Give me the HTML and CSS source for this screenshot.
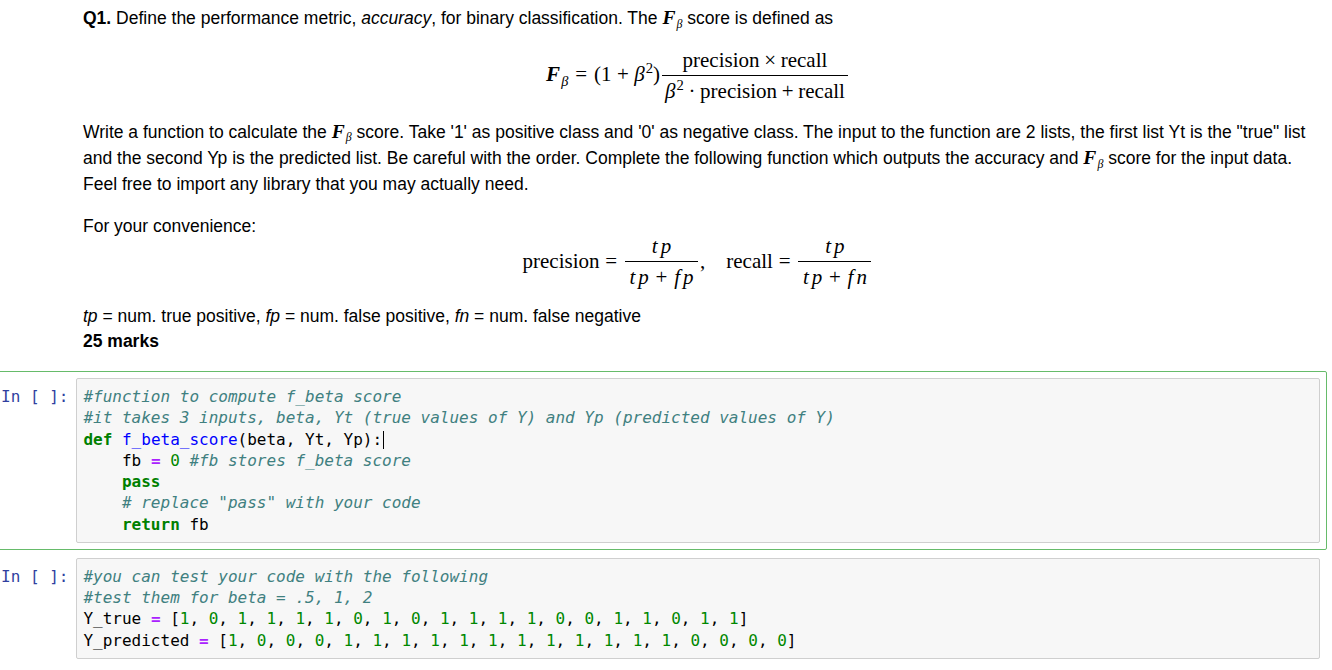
FILE: index.html
```html
<!DOCTYPE html>
<html lang="en">
<head>
<meta charset="utf-8">
<title>Q1 notebook</title>
<link rel="stylesheet" href="styles.css">
</head>
<body>
<div class="notebook">
  <div class="cell text-cell">
    <div class="prompt"></div>
    <div class="rendered">
      <p class="p1"><b>Q1.</b> Define the performance metric, <i>accuracy</i>, for binary classification. The <span class="mi"><span class="F">F</span><sub>β</sub></span> score is defined as</p>
      <div class="display d1">
        <span class="mrow"><span class="F">F</span><sub class="msub">β</sub><span class="rel">=</span>(1<span class="bin">+</span><i>β</i><sup class="msup">2</sup>)</span>
        <span class="frac">
          <span class="num">precision<span class="bin">×</span>recall</span>
          <span class="den"><i>β</i><sup class="msup">2</sup><span class="bin">·</span>precision<span class="bin">+</span>recall</span>
        </span>
      </div>
      <p class="p2">Write a function to calculate the <span class="mi"><span class="F">F</span><sub>β</sub></span> score. Take '1' as positive class and '0' as negative class. The input to the function are 2 lists, the first list Yt is the "true" list and the second Yp is the predicted list. Be careful with the order. Complete the following function which outputs the accuracy and <span class="mi"><span class="F">F</span><sub>β</sub></span> score for the input data. Feel free to import any library that you may actually need.</p>
      <p class="p3">For your convenience:</p>
      <div class="display d2">
        <span class="mrow">precision<span class="rel">=</span></span>
        <span class="frac">
          <span class="num"><i>t</i><i>p</i></span>
          <span class="den"><i>t</i><i>p</i><span class="bin">+</span><i>f</i><i>p</i></span>
        </span>
        <span class="mrow">,<span class="quad"></span>recall<span class="rel">=</span></span>
        <span class="frac">
          <span class="num"><i>t</i><i>p</i></span>
          <span class="den"><i>t</i><i>p</i><span class="bin">+</span><i>f</i><i>n</i></span>
        </span>
      </div>
      <p class="p4"><i>tp</i> = num. true positive, <i>fp</i> = num. false positive, <i>fn</i> = num. false negative<br><b>25 marks</b></p>
    </div>
  </div>

  <div class="cell code-cell selected">
    <div class="prompt">In [ ]:</div>
    <div class="input">
      <div class="line"><span class="c">#function to compute f_beta score</span></div>
      <div class="line"><span class="c">#it takes 3 inputs, beta, Yt (true values of Y) and Yp (predicted values of Y)</span></div>
      <div class="line"><span class="k">def</span> <span class="d">f_beta_score</span>(beta, Yt, Yp):<span class="cursor"></span></div>
      <div class="line">    fb <span class="o">=</span> <span class="n">0</span> <span class="c">#fb stores f_beta score</span></div>
      <div class="line">    <span class="k">pass</span></div>
      <div class="line">    <span class="c"># replace "pass" with your code</span></div>
      <div class="line">    <span class="k">return</span> fb</div>
    </div>
  </div>

  <div class="cell code-cell second">
    <div class="prompt">In [ ]:</div>
    <div class="input">
      <div class="line"><span class="c">#you can test your code with the following</span></div>
      <div class="line"><span class="c">#test them for beta = .5, 1, 2</span></div>
      <div class="line">Y_true <span class="o">=</span> [<span class="n">1</span>, <span class="n">0</span>, <span class="n">1</span>, <span class="n">1</span>, <span class="n">1</span>, <span class="n">1</span>, <span class="n">0</span>, <span class="n">1</span>, <span class="n">0</span>, <span class="n">1</span>, <span class="n">1</span>, <span class="n">1</span>, <span class="n">1</span>, <span class="n">0</span>, <span class="n">0</span>, <span class="n">1</span>, <span class="n">1</span>, <span class="n">0</span>, <span class="n">1</span>, <span class="n">1</span>]</div>
      <div class="line">Y_predicted <span class="o">=</span> [<span class="n">1</span>, <span class="n">0</span>, <span class="n">0</span>, <span class="n">0</span>, <span class="n">1</span>, <span class="n">1</span>, <span class="n">1</span>, <span class="n">1</span>, <span class="n">1</span>, <span class="n">1</span>, <span class="n">1</span>, <span class="n">1</span>, <span class="n">1</span>, <span class="n">1</span>, <span class="n">1</span>, <span class="n">1</span>, <span class="n">0</span>, <span class="n">0</span>, <span class="n">0</span>, <span class="n">0</span>]</div>
    </div>
  </div>
</div>
</body>
</html>
```

FILE: styles.css
```css
* { box-sizing: border-box; }

html, body {
  margin: 0;
  padding: 0;
  background: #fff;
}

body {
  font-family: "Liberation Sans", Arial, sans-serif;
  font-size: 17.5px;
  line-height: 25.4px;
  color: #000;
  overflow: hidden;
}

.cell {
  display: flex;
  margin: 0 5px 0 -6px;
  border: 1px solid transparent;
  border-radius: 2px;
  padding: 6px;
}

.cell.selected { border-color: #66bb6a; }
.cell.second { margin-top: 1px; }

.text-cell { margin-top: -2px; }

.prompt {
  flex: 0 0 75px;
  font-family: "DejaVu Sans Mono", "Liberation Mono", monospace;
  font-size: 16px;
  line-height: 21.25px;
  color: #303f9f;
  text-align: right;
  padding: 8px 8px 0 0;
  white-space: pre;
}

/* ---------- markdown cell ---------- */
.rendered {
  flex: 1;
  min-width: 0;
  padding: 0 7px 9.5px 7px;
}

.rendered p { margin: 0; }
.p2 { margin-bottom: 17px !important; }

.mi { white-space: nowrap; }

.F {
  font-family: "Liberation Serif", "Times New Roman", serif;
  font-weight: bold;
  font-style: italic;
}

.mi .F { font-size: 19.5px; }

.mi sub, .msub {
  font-family: "Liberation Serif", "Times New Roman", serif;
  font-style: italic;
  font-size: 0.68em;
  line-height: 0;
  vertical-align: -0.3em;
  margin-left: 1px;
}

.msup {
  font-size: 0.7em;
  line-height: 0;
  vertical-align: 0.55em;
  margin-left: 1px;
}

.display {
  display: flex;
  justify-content: center;
  align-items: center;
  font-family: "Liberation Serif", "Times New Roman", serif;
  font-size: 21px;
  line-height: 20px;
}

.d1 { margin: 19px 0 17.5px; }
.d2 { margin: -4px 0 17.2px; }

.mrow {
  white-space: nowrap;
  margin-bottom: 3px;
}

.d1 .rel { margin: 0 0.33em; }
.d1 .mrow .bin { margin: 0 0.26em; }

.d2 .mrow { margin-bottom: 1px; }
.d2 i { margin: 0 1.5px; }
.d2 .bin { margin: 0 0.25em; }

.rel { margin: 0 0.278em; }
.bin { margin: 0 0.222em; }
.quad { display: inline-block; width: 1em; }

.frac {
  display: inline-flex;
  flex-direction: column;
  align-items: stretch;
  margin: 0 2px;
}

.num, .den {
  text-align: center;
  white-space: nowrap;
  padding-left: 3px;
  padding-right: 3px;
}

.num { padding-bottom: 5px; }

.den {
  border-top: 1px solid #000;
  padding-top: 5px;
}

/* ---------- code cells ---------- */
.input {
  flex: 1;
  min-width: 0;
  background: #f7f7f7;
  border: 1px solid #cfcfcf;
  border-radius: 2px;
  padding: 7px 6px;
  font-family: "DejaVu Sans Mono", "Liberation Mono", monospace;
  font-size: 16px;
  line-height: 21.25px;
  color: #000;
}

.line { white-space: pre; }

.c { color: #408080; font-style: italic; }
.k { color: #008000; font-weight: bold; }
.d { color: #0000ff; }
.o { color: #aa22ff; font-weight: bold; }
.n { color: #008800; }

.cursor {
  display: inline-block;
  width: 0;
  height: 18px;
  border-left: 1px solid #000;
  vertical-align: -4px;
  margin-left: 1px;
}
```
